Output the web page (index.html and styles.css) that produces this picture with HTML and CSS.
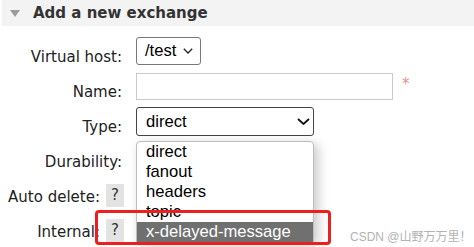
FILE: index.html
```html
<!DOCTYPE html>
<html lang="en">
<head>
    <meta charset="UTF-8">
    <meta name="viewport" content="width=device-width, initial-scale=1.0">
    <title>Add a new exchange</title>
    <link rel="stylesheet" href="styles.css">
</head>
<body>
    <h2 class="section-title"><span class="arrow"></span>Add a new exchange</h2>
    <form class="exchange-form">
        <label class="label"><span class="label-text">Virtual host:</span></label>
        <div class="field">
            <div class="select select-vhost">
                <span>/test</span>
                <svg width="10" height="6" viewBox="0 0 10 6"><polyline points="0.8,0.8 5,5 9.2,0.8" fill="none" stroke="#222" stroke-width="1.3"/></svg>
            </div>
        </div>

        <label class="label" for="name"><span class="label-text">Name:</span></label>
        <div class="field">
            <input type="text" id="name" name="name" class="text-input">
            <span class="required">*</span>
        </div>

        <label class="label"><span class="label-text">Type:</span></label>
        <div class="field">
            <div class="select select-type">
                <span>direct</span>
                <svg width="13" height="7" viewBox="0 0 13 7"><polyline points="1,1 6.5,6 12,1" fill="none" stroke="#111" stroke-width="1.8"/></svg>
            </div>
            <ul class="options">
                <li>direct</li>
                <li>fanout</li>
                <li>headers</li>
                <li>topic</li>
                <li class="selected">x-delayed-message</li>
            </ul>
        </div>

        <label class="label"><span class="label-text">Durability:</span></label>
        <div class="field"></div>

        <label class="label label-help"><span class="label-text">Auto delete:</span><span class="help">?</span></label>
        <div class="field"></div>

        <label class="label label-help"><span class="label-text">Internal:</span><span class="help">?</span></label>
        <div class="field"></div>
    </form>

    <div class="mark-box"></div>
    <div class="watermark">CSDN @山野万万里！</div>
</body>
</html>
```

FILE: styles.css
```css
body {
    margin: 0;
    position: relative;
    height: 247px;
    overflow: hidden;
    background-color: #fff;
    font-family: "DejaVu Sans", Verdana, sans-serif;
    font-size: 15px;
    color: #222;
}
.section-title {
    display: flex;
    align-items: center;
    height: 26px;
    margin: 0 0 0 2px;
    padding-left: 8px;
    background-color: #f3f3f3;
    font-size: 15px;
    font-weight: bold;
    color: #333;
}
.arrow {
    width: 0;
    height: 0;
    border-left: 5.5px solid transparent;
    border-right: 5.5px solid transparent;
    border-top: 7px solid #9c9c9c;
    margin-right: 13px;
}
.exchange-form {
    display: grid;
    grid-template-columns: 124px 1fr;
    grid-auto-rows: 35px;
    column-gap: 12px;
    margin-top: 11px;
}
.label {
    display: flex;
    justify-content: flex-end;
    align-items: flex-start;
    padding-right: 2px;
}
.label-text {
    padding-top: 11px;
    line-height: 18px;
}
.label-help {
    padding-right: 0;
}
.help {
    width: 18px;
    height: 23px;
    margin-top: 7px;
    margin-left: 6px;
    line-height: 23px;
    text-align: center;
    background-color: #e3e3e3;
    color: #333;
}
.field {
    position: relative;
    display: flex;
    align-items: flex-start;
}
.select {
    display: flex;
    align-items: center;
    justify-content: space-between;
    box-sizing: border-box;
    border-radius: 3px;
    background-color: #fff;
    font-family: "Liberation Sans", Arial, sans-serif;
    font-size: 16.6px;
    color: #000;
}
.select-vhost {
    width: 65px;
    height: 28px;
    padding: 0 7px 0 8px;
    border: 1px solid #777;
}
.select-type {
    width: 178px;
    height: 29px;
    padding: 0 3px 0 9px;
    border: 1px solid #444;
}
.text-input {
    box-sizing: border-box;
    width: 257px;
    height: 27px;
    margin: 1px 0 0 0;
    border: 1px solid #cacaca;
    border-radius: 0;
    padding: 0 6px;
}
.required {
    margin-left: 9px;
    padding-top: 3px;
    line-height: 18px;
    color: #f08c8c;
}
.options {
    position: absolute;
    top: 34px;
    left: 0;
    width: 178px;
    box-sizing: border-box;
    margin: 0;
    padding: 0;
    list-style: none;
    background-color: #fff;
    border: 1px solid #bdbdbd;
    border-radius: 4px 4px 0 0;
    box-shadow: 4px 3px 12px rgba(0, 0, 0, 0.22);
    font-family: "Liberation Sans", Arial, sans-serif;
    font-size: 16.6px;
    line-height: 20px;
    color: #000;
}
.options li {
    padding-left: 9px;
}
.options li.selected {
    background-color: #707070;
    color: #fff;
}
.mark-box {
    position: absolute;
    left: 95px;
    top: 210px;
    width: 236px;
    height: 35px;
    box-sizing: border-box;
    border: 3px solid #ec1f1f;
    border-radius: 4px;
}
.watermark {
    position: absolute;
    left: 350px;
    top: 227px;
    white-space: nowrap;
    font-family: "Liberation Sans", "Noto Sans CJK SC", sans-serif;
    font-size: 12px;
    color: #b2b2b2;
}
```
